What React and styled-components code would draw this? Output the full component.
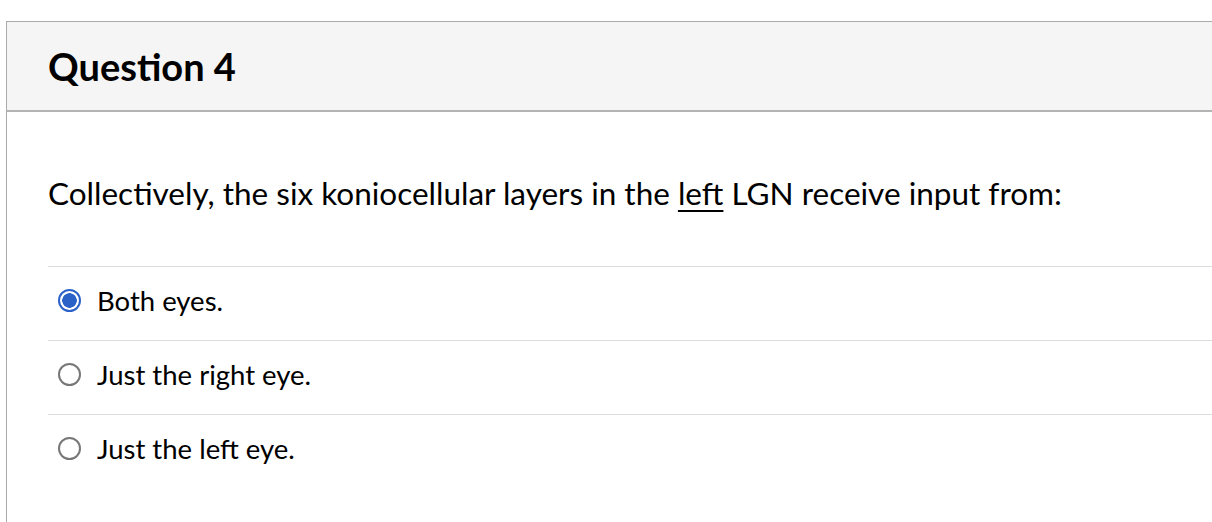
import React, { useState } from 'react';
import styled, { createGlobalStyle } from 'styled-components';

const GlobalStyle = createGlobalStyle`
    html, body {
        margin:0;
        padding:0;
        background:#fff;
        font-family:Lato, "Noto Sans", sans-serif;
        color:#000;
    }
`;

const answers = [
    { id: 'a', label: 'Both eyes.' },
    { id: 'b', label: 'Just the right eye.' },
    { id: 'c', label: 'Just the left eye.' },
];

function App() {
    const [picked, setPicked] = useState('a');

    return (
        <Page>
            <GlobalStyle />
            <Panel>
                <Header>
                    <Title>Question 4</Title>
                </Header>
                <Body>
                    <Prompt>
                        Collectively, the six koniocellular layers in the <u>left</u> LGN receive input from:
                    </Prompt>
                    <Answers>
                        {answers.map((a) => (
                            <Answer key={a.id} onClick={() => setPicked(a.id)}>
                                <Radio $checked={picked === a.id} />
                                <AnswerText>{a.label}</AnswerText>
                            </Answer>
                        ))}
                    </Answers>
                </Body>
            </Panel>
        </Page>
    );
}

export default App;

const Page = styled.div`
    padding:21px 0 0 6px;
    height:522px;
    box-sizing:border-box;
    overflow:hidden;
`;

const Panel = styled.div`
    border:1px solid #aaa;
    border-right:none;
    border-bottom:none;
    height:100%;
`;

const Header = styled.div`
    background:#f5f5f5;
    height:88px;
    border-bottom:2px solid #b4b4b4;
    display:flex;
    align-items:center;
    padding-left:41px;
`;

const Title = styled.h2`
    margin:0;
    font-size:38px;
    font-weight:700;
`;

const Body = styled.div`
    padding:61px 0 0 41px;
`;

const Prompt = styled.p`
    margin:0;
    font-size:31.5px;
    line-height:40px;
    u {
        text-underline-offset:5px;
        text-decoration-thickness:2px;
    }
`;

const Answers = styled.div`
    margin-top:53px;
`;

const Answer = styled.label`
    display:flex;
    align-items:center;
    height:74px;
    padding-bottom:6px;
    box-sizing:border-box;
    border-top:1px solid #ddd;
    font-size:27.5px;
    cursor:pointer;
`;

const AnswerText = styled.span`
    margin-left:16px;
`;

const Radio = styled.span`
    flex:none;
    width:19px;
    height:19px;
    margin-left:10px;
    border-radius:50%;
    border:2px solid ${(p) => (p.$checked ? '#2b62c8' : '#777')};
    box-sizing:content-box;
    background:${(p) => (p.$checked ? 'radial-gradient(circle, #2b62c8 0 7px, #fff 7.5px)' : '#fff')};
`;
